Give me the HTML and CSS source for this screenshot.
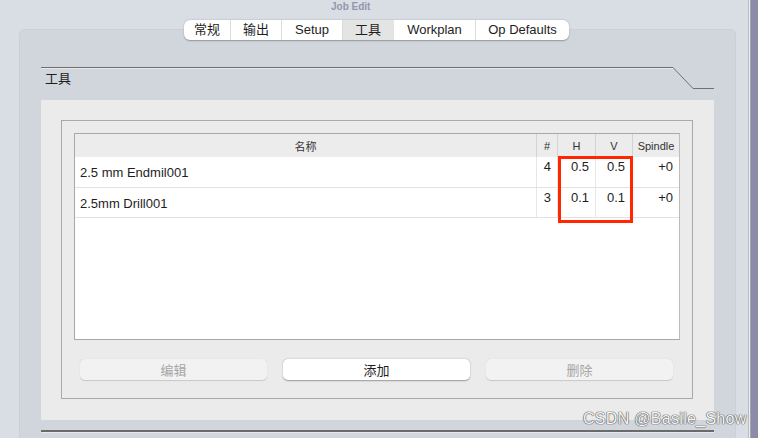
FILE: index.html
```html
<!DOCTYPE html>
<html lang="zh">
<head>
  <meta charset="UTF-8">
  <title>Job Edit</title>
  <link rel="stylesheet" href="styles.css">
</head>
<body>
  <div id="window">
    <div id="main">
      <!-- Título y pestañas -->
      <div id="title">Job Edit</div>
      <div id="tabs">
        <span class="tab" style="width:47px">常规</span>
        <span class="tab" style="width:51px">输出</span>
        <span class="tab" style="width:61px">Setup</span>
        <span class="tab active" style="width:51px">工具</span>
        <span class="tab" style="width:82px">Workplan</span>
        <span class="tab last">Op Defaults</span>
      </div>

      <div id="group">
        <!-- Sección Herramientas -->
        <div class="section-head">
          <div class="head-line"><span class="head-label">工具</span></div>
          <svg class="head-tail" width="41" height="23" viewBox="0 0 41 23">
            <polyline points="0,0.5 20,21.5 41,21.5" fill="none" stroke="#707070" stroke-width="1"/>
          </svg>
        </div>
        <div class="panel">
          <div class="frame">
            <div class="table-wrap">
              <table id="tools">
                <thead>
                  <tr>
                    <th class="c-name">名称</th>
                    <th class="c-num">#</th>
                    <th class="c-h">H</th>
                    <th class="c-v">V</th>
                    <th class="c-sp">Spindle</th>
                  </tr>
                </thead>
                <tbody>
                  <tr>
                    <td class="c-name">2.5 mm Endmil001</td>
                    <td class="c-num">4</td>
                    <td class="c-h">0.5</td>
                    <td class="c-v">0.5</td>
                    <td class="c-sp">+0</td>
                  </tr>
                  <tr>
                    <td class="c-name">2.5mm Drill001</td>
                    <td class="c-num">3</td>
                    <td class="c-h">0.1</td>
                    <td class="c-v">0.1</td>
                    <td class="c-sp">+0</td>
                  </tr>
                </tbody>
              </table>
              <div class="mark"></div>
            </div>
            <div class="buttons">
              <button class="btn" disabled>编辑</button>
              <button class="btn">添加</button>
              <button class="btn" disabled>删除</button>
            </div>
          </div>
        </div>

        <!-- Siguiente sección (cortada) -->
        <div class="section-head next">
          <div class="head-line"><span class="head-label">Default Holder</span></div>
        </div>
      </div>
    </div>
    <div id="edge"></div>
  </div>
  <div id="watermark">CSDN @Basile_Show</div>
</body>
</html>
```

FILE: styles.css
```css
/* Estilos generales */
html, body {
  margin: 0;
  height: 438px;
  overflow: hidden;
}
body {
  font-family: "Liberation Sans", "Noto Sans CJK SC", sans-serif;
  font-size: 13px;
  color: #1e1e1e;
  background: #d9dde4;
  position: relative;
}
#window {
  display: flex;
  height: 438px;
}
#main {
  width: 748px;
}
/* Borde derecho de la ventana */
#edge {
  width: 10px;
  background: linear-gradient(90deg, #b9bcc3 0, #b9bcc3 1px, #eceef2 1px, #eceef2 2px, #a3a5ac 2px, #a3a5ac 3px, #8c8ca8 3px);
}
/* Título */
#title {
  padding-left: 331px;
  font-size: 10px;
  font-weight: bold;
  color: #9297ac;
  padding-top: 1px;
  height: 19px;
  line-height: 12px;
}
/* Pestañas */
#tabs {
  display: flex;
  margin-left: 184px;
  width: 385px;
  height: 20px;
  background: #fff;
  border-radius: 6px;
  box-shadow: 0 0.5px 1.5px rgba(0,0,0,0.3);
  position: relative;
  z-index: 2;
  overflow: hidden;
}
.tab {
  text-align: center;
  line-height: 20px;
  border-right: 1px solid #dcdcdc;
  box-sizing: border-box;
}
.tab.active {
  background: #e4e4e4;
  border-right-color: #e4e4e4;
}
.tab.last {
  flex: 1;
  border-right: none;
}
/* Caja de grupo */
#group {
  margin: -11px 12px 0 19px;
  height: 420px;
  background: #d1d5dc;
  border-radius: 6px 6px 0 0;
  box-shadow: inset 0 0 0 1px #cbcfd6;
  padding: 38px 22px 0 22px;
  box-sizing: border-box;
}
/* Encabezado de sección */
.section-head {
  display: flex;
  height: 33px;
}
.head-line {
  flex: 1;
  border-top: 1px solid #707070;
  box-shadow: inset 0 1px 0 #e6e8ec;
}
.head-label {
  display: block;
  padding: 3px 0 0 4px;
  line-height: 15px;
}
.head-tail {
  display: block;
}
.section-head.next {
  margin-top: 10px;
}
.section-head.next .head-line {
  border-top: 2px solid #6a6a6a;
}
.section-head.next .head-label {
  padding-top: 3px;
  color: #333;
}
/* Panel */
.panel {
  background: #ebebeb;
  padding: 20px 21px 21px 20px;
}
.frame {
  border: 1px solid #a9a9a9;
  padding: 12px 12px 0 12px;
  height: 279px;
  box-sizing: border-box;
}
.table-wrap {
  position: relative;
  height: 207px;
  background: #fff;
  border: 1px solid #a8a8a8;
  border-right-color: #bcbcbc;
  box-sizing: border-box;
  width: 606px;
}
#tools {
  border-collapse: collapse;
  table-layout: fixed;
  width: 100%;
}
#tools thead tr {
  height: 23px;
}
#tools tbody tr {
  height: 30px;
}
#tools th {
  background: #ececec;
  font-weight: normal;
  font-size: 11px;
  color: #333;
  text-align: center;
  border-left: 1px solid #d3d3d3;
  padding: 0;
  white-space: nowrap;
}
#tools td {
  border-bottom: 1px solid #e2e2e2;
  border-left: 1px solid #e6e6e6;
  padding: 2px 6px 0 0;
  text-align: right;
  vertical-align: top;
  line-height: 16px;
}
#tools th.c-name, #tools td.c-name {
  border-left: none;
}
#tools td.c-name {
  text-align: left;
  padding: 3px 0 0 5px;
  vertical-align: middle;
}
.c-name { width: 461px; }
.c-num { width: 20px; }
.c-h { width: 37px; }
.c-v { width: 36px; }
#tools td.c-v { padding-right: 7px; }
/* Marca roja sobre la tabla */
.mark {
  position: absolute;
  left: 483px;
  top: 22px;
  width: 75px;
  height: 67px;
  border: 3px solid #ff2600;
  box-sizing: border-box;
}
/* Botones */
.buttons {
  display: flex;
  gap: 16px;
  margin: 19px 6px 0 6px;
}
.btn {
  width: 187px;
  height: 21px;
  border: none;
  border-radius: 5px;
  background: #fff;
  box-shadow: 0 0.5px 1.5px rgba(0,0,0,0.35);
  font-family: "Liberation Sans", "Noto Sans CJK SC", sans-serif;
  font-size: 13px;
  color: #1e1e1e;
  padding: 0;
}
.btn:disabled {
  background: #f2f2f2;
  color: #a6a6a6;
  box-shadow: 0 0.5px 1px rgba(0,0,0,0.15);
}
/* Marca de agua */
#watermark {
  position: absolute;
  left: 583px;
  top: 410px;
  font-size: 16px;
  color: #f6f6f6;
  text-shadow: 0 0 1px #555, 0 0 1px #555, 0 0 1px #555;
  letter-spacing: 0.3px;
}
```
